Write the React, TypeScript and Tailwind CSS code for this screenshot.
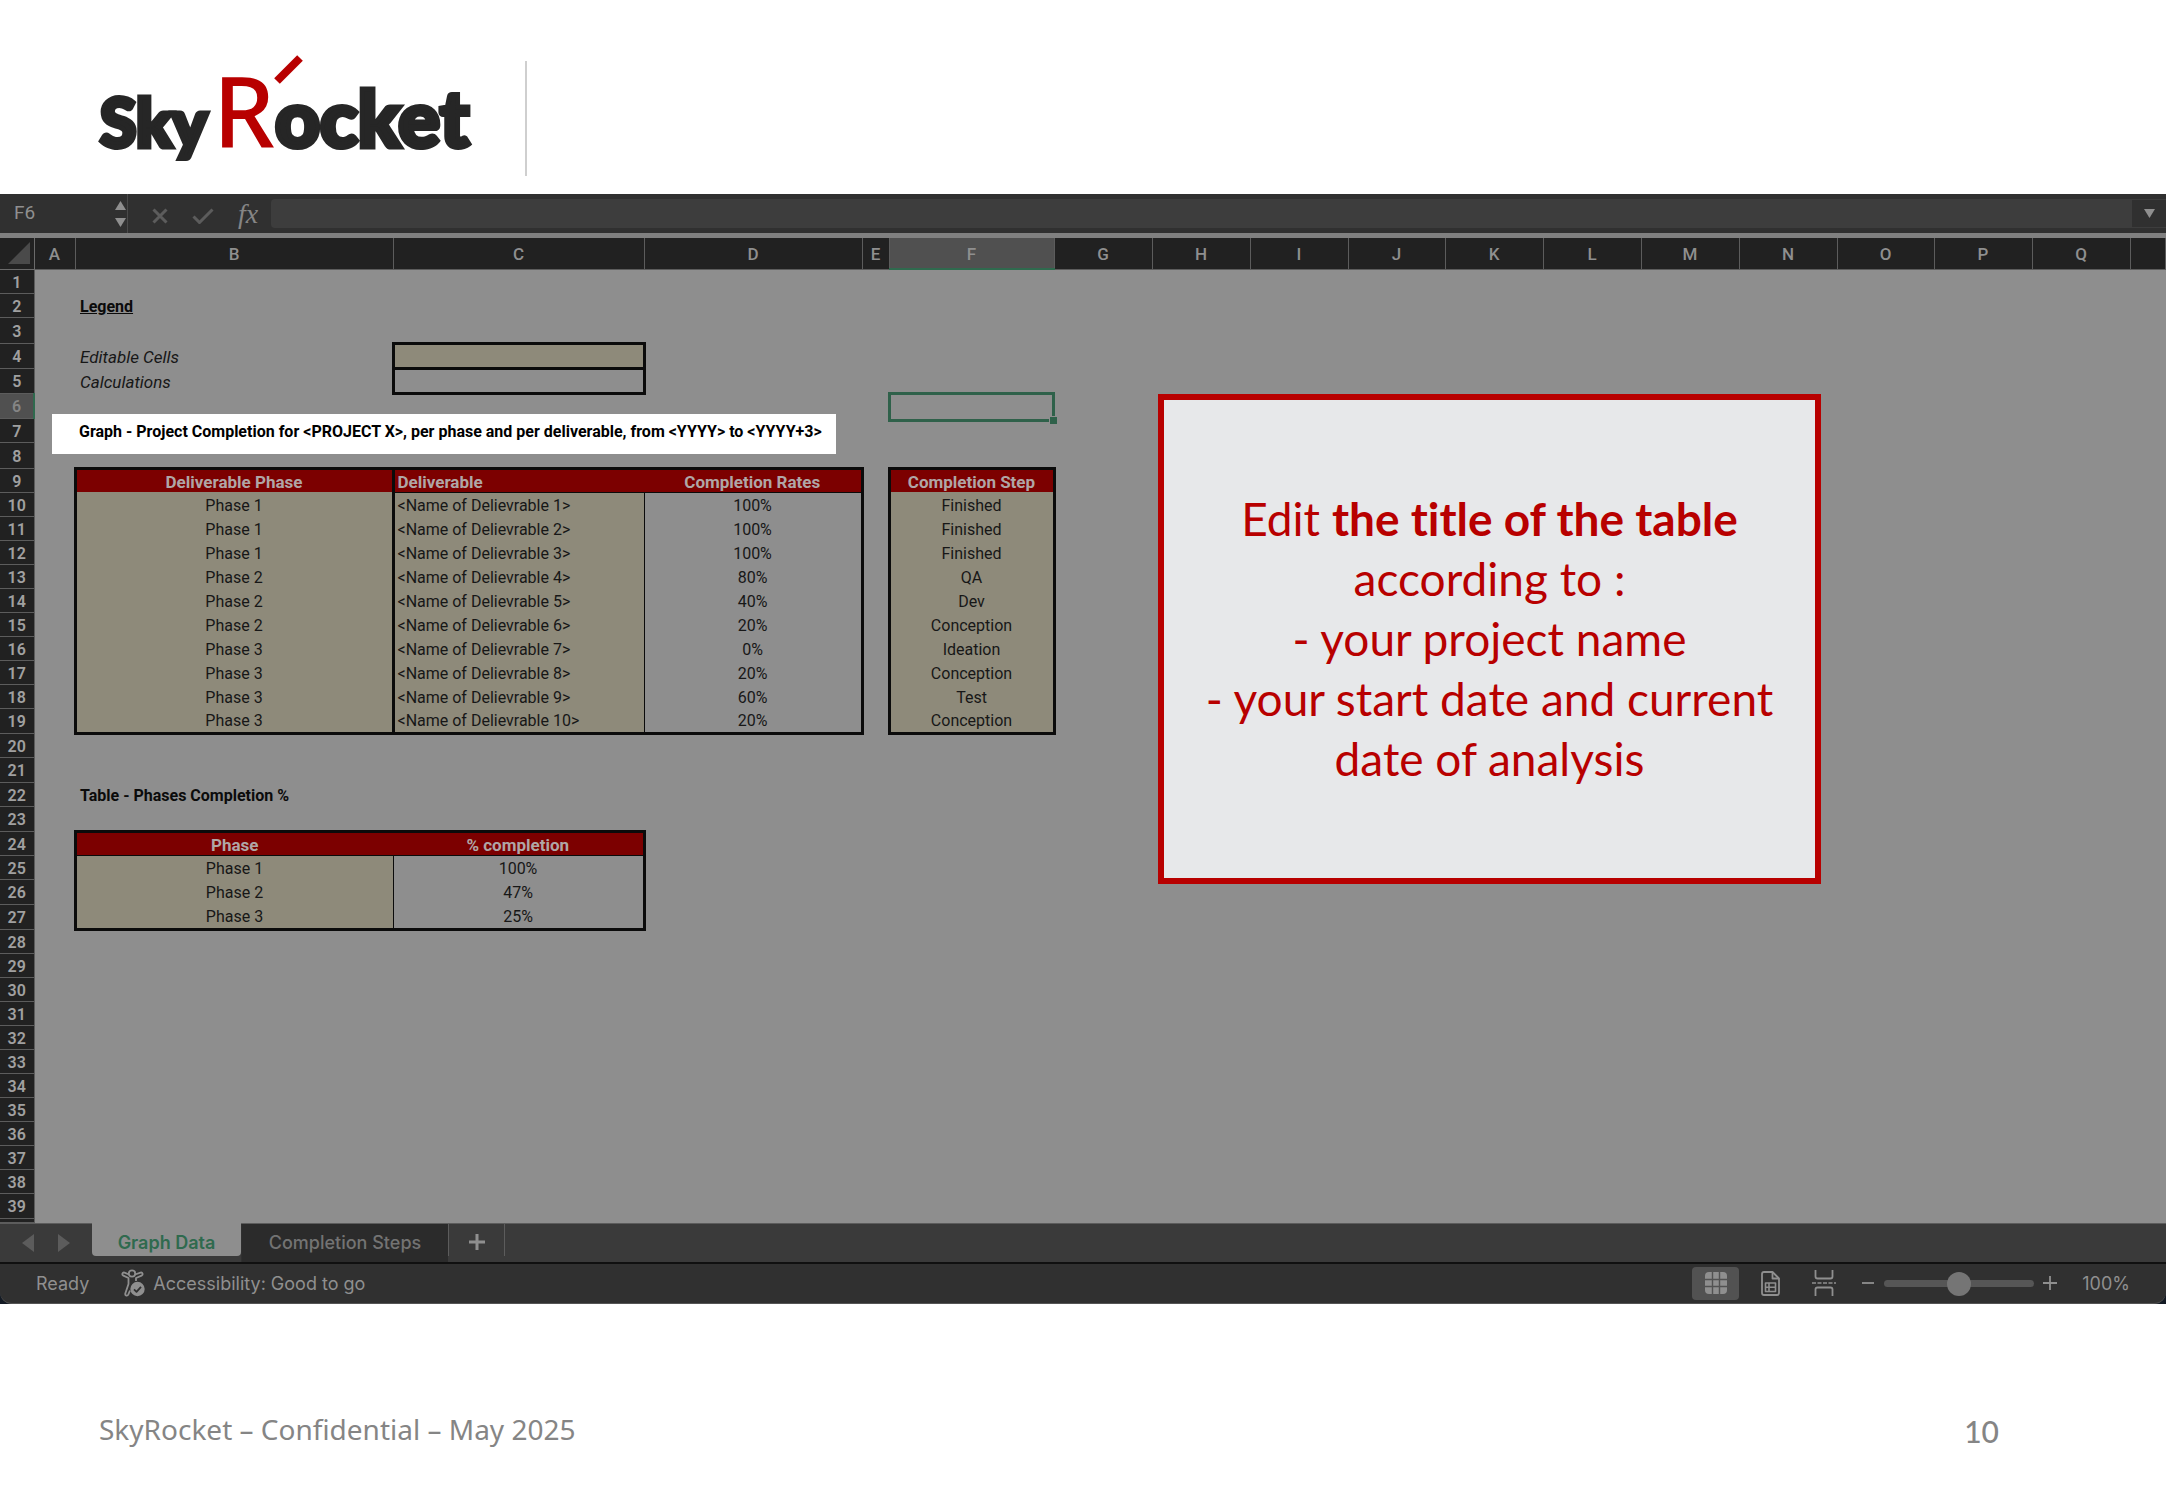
import React from "react";

const columns: { name: string; width: string }[] = [
  { name: "A", width: "w-[41px]" },
  { name: "B", width: "w-[318px]" },
  { name: "C", width: "w-[251px]" },
  { name: "D", width: "w-[218px]" },
  { name: "E", width: "w-[27px]" },
  { name: "F", width: "w-[165px]" },
  { name: "G", width: "w-[98px]" },
  { name: "H", width: "w-[98px]" },
  { name: "I", width: "w-[98px]" },
  { name: "J", width: "w-[97px]" },
  { name: "K", width: "w-[98px]" },
  { name: "L", width: "w-[98px]" },
  { name: "M", width: "w-[98px]" },
  { name: "N", width: "w-[98px]" },
  { name: "O", width: "w-[97px]" },
  { name: "P", width: "w-[98px]" },
  { name: "Q", width: "w-[98px]" },
  { name: "", width: "" },
];

const deliverables = [
  { phase: "Phase 1", name: "<Name of Delievrable 1>", rate: "100%", step: "Finished" },
  { phase: "Phase 1", name: "<Name of Delievrable 2>", rate: "100%", step: "Finished" },
  { phase: "Phase 1", name: "<Name of Delievrable 3>", rate: "100%", step: "Finished" },
  { phase: "Phase 2", name: "<Name of Delievrable 4>", rate: "80%", step: "QA" },
  { phase: "Phase 2", name: "<Name of Delievrable 5>", rate: "40%", step: "Dev" },
  { phase: "Phase 2", name: "<Name of Delievrable 6>", rate: "20%", step: "Conception" },
  { phase: "Phase 3", name: "<Name of Delievrable 7>", rate: "0%", step: "Ideation" },
  { phase: "Phase 3", name: "<Name of Delievrable 8>", rate: "20%", step: "Conception" },
  { phase: "Phase 3", name: "<Name of Delievrable 9>", rate: "60%", step: "Test" },
  { phase: "Phase 3", name: "<Name of Delievrable 10>", rate: "20%", step: "Conception" },
];

const phases = [
  { phase: "Phase 1", completion: "100%" },
  { phase: "Phase 2", completion: "47%" },
  { phase: "Phase 3", completion: "25%" },
];

const ink = "border-[#0b0b0b]";
const redCell = "bg-[#7c0000] text-[17px] font-bold text-[#b0a6a6]";
const beige = "bg-[#8e8a7a]";

function Row({
  n,
  h = "h-6",
  selected = false,
  children,
}: {
  n: number | "";
  h?: string;
  selected?: boolean;
  children?: React.ReactNode;
}) {
  return (
    <tr className={h}>
      <th
        scope="row"
        className={
          selected
            ? "border-y border-r-2 border-y-[#5c5c5c] border-r-[#2f6a4e] bg-[#505050] font-semibold text-[#858585]"
            : "border-y border-r border-[#5c5c5c] bg-[#212121] font-semibold text-[#a0a0a0]"
        }
      >
        {n}
      </th>
      {children ?? <td colSpan={18} />}
    </tr>
  );
}

function Logo() {
  return (
    <div className="flex items-baseline font-['Lato'] leading-none font-black text-[#262626]">
      <span className="w-[114px] pl-px text-[66px] [-webkit-text-stroke:5px_#262626]">Sky</span>
      <span className="relative font-['Noto_Sans'] text-[98px] font-medium text-[#b80000]">
        R
        <svg viewBox="0 0 30 30" className="absolute top-[-5px] left-[61px] h-[30px] w-[30px]" aria-hidden="true">
          <path d="M3 26 L26 3" stroke="#b80000" strokeWidth="8" fill="none" />
        </svg>
      </span>
      <span className="text-[78px] [-webkit-text-stroke:5px_#262626]">ocket</span>
    </div>
  );
}

function FormulaBar() {
  return (
    <div className="flex h-[39px] bg-[#303030] text-[#8f8f8f]">
      <div className="flex w-32 items-center border-r border-[#4a4a4a] pr-px pl-[14px]">
        <input
          aria-label="Name box"
          defaultValue="F6"
          className="min-w-0 flex-1 bg-transparent text-[19px] outline-none"
        />
        <div className="flex flex-col gap-2">
          <button aria-label="Previous name" className="block">
            <svg viewBox="0 0 11 9" className="h-[9px] w-[11px]">
              <path d="M5.500 0L11 9H0z" fill="#8f8f8f" />
            </svg>
          </button>
          <button aria-label="Next name" className="block">
            <svg viewBox="0 0 11 9" className="h-[9px] w-[11px]">
              <path d="M5.500 9L11 0H0z" fill="#8f8f8f" />
            </svg>
          </button>
        </div>
      </div>
      <div className="flex w-[143px] items-center gap-6 pt-1 pl-6">
        <button aria-label="Cancel">
          <svg viewBox="0 0 16 16" className="h-4 w-4">
            <path d="M1.500 1.500l13 13M14.500 1.500l-13 13" stroke="#5c5c5c" strokeWidth="3" />
          </svg>
        </button>
        <button aria-label="Enter">
          <svg viewBox="0 0 22 16" className="h-4 w-[22px]">
            <path d="M1.500 8.500l6 6L20.500 1.500" stroke="#5c5c5c" strokeWidth="3" fill="none" />
          </svg>
        </button>
        <button
          aria-label="Insert function"
          className="pb-1 font-['Liberation_Serif'] text-[28px] leading-none text-[#858585] italic"
        >
          fx
        </button>
      </div>
      <div className="my-[5px] flex min-w-0 flex-1 rounded-l-sm bg-[#3d3d3d]">
        <input aria-label="Formula" className="min-w-0 flex-1 bg-transparent px-2 outline-none" />
        <button aria-label="Expand formula bar" className="my-px flex w-[34px] items-center justify-center bg-[#303030]">
          <svg viewBox="0 0 11 9" className="h-[9px] w-[11px]">
            <path d="M5.500 9L11 0H0z" fill="#8f8f8f" />
          </svg>
        </button>
      </div>
    </div>
  );
}

function Sheet() {
  return (
    <table className="w-full table-fixed border-collapse bg-[#8e8e8e] text-[16px] leading-[18px] text-[#171717] [&_tbody_td]:pt-[3px] [&_tbody_th]:pt-[3px]">
      <colgroup>
        <col className="w-[34px]" />
        {columns.map((c, i) => (
          <col key={i} className={c.width} />
        ))}
      </colgroup>
      <thead>
        <tr className="h-[31px] bg-[#212121] text-[17px] text-[#8f8f8f]">
          <th className="border-r border-b border-[#6a6a6a]">
            <svg viewBox="0 0 22 22" className="ml-2 h-[22px] w-[22px]" aria-label="Select all">
              <path d="M22 0V22H0z" fill="#4a4a4a" />
            </svg>
          </th>
          {columns.map((c, i) => (
            <th
              key={i}
              scope="col"
              className={
                c.name === "F"
                  ? "border-x border-b-2 border-x-[#5c5c5c] border-b-[#2f6a4e] bg-[#505050] pt-[2px] font-medium"
                  : "border-x border-b border-[#5c5c5c] pt-[2px] font-medium"
              }
            >
              {c.name}
            </th>
          ))}
        </tr>
      </thead>
      <tbody>
        <Row n={1} />
        <Row n={2}>
          <td />
          <td className="pl-[5px] font-bold text-[#0b0b0b] underline">Legend</td>
        </Row>
        <Row n={3} h="h-[26px]" />
        <Row n={4} h="h-[25px]">
          <td />
          <td className="pl-[5px] text-[17px] italic">Editable Cells</td>
          <td className={`border-[3px] ${ink} ${beige}`} />
        </Row>
        <Row n={5} h="h-[25px]">
          <td />
          <td className="pl-[5px] text-[17px] italic">Calculations</td>
          <td className={`border-[3px] ${ink}`} />
        </Row>
        <Row n={6} h="h-[25px]" selected>
          <td colSpan={5} />
          <td>
            <div className="relative h-5">
              <div className="absolute -inset-x-px -top-[5px] -bottom-[5px] border-[3px] border-[#2f614a]">
                <span className="absolute -right-[5px] -bottom-[5px] h-2 w-2 border-t border-l border-[#8e8e8e] bg-[#2f614a]" />
              </div>
            </div>
          </td>
        </Row>
        <Row n={7}>
          <td />
          <td>
            <div className="relative h-5">
              <h1 className="absolute -top-2 -left-[23px] flex h-10 items-center bg-white pr-[14px] pb-1 pl-[27px] font-bold whitespace-nowrap text-black">
                Graph - Project Completion for &lt;PROJECT X&gt;, per phase and per deliverable, from &lt;YYYY&gt; to
                &lt;YYYY+3&gt;
              </h1>
            </div>
          </td>
        </Row>
        <Row n={8} h="h-[26px]" />
        <Row n={9}>
          <td />
          <td className={`border-3 ${ink} border-b-0 text-center ${redCell}`}>Deliverable Phase</td>
          <td className={`border-t-3 border-b ${ink} pl-[3px] ${redCell}`}>Deliverable</td>
          <td className={`border-t-3 border-r-3 border-b ${ink} text-center ${redCell}`}>Completion Rates</td>
          <td />
          <td className={`border-3 border-b-0 ${ink} text-center ${redCell}`}>Completion Step</td>
        </Row>
        {deliverables.map((d, i) => {
          const last = i === deliverables.length - 1;
          const end = last ? "border-b-3" : "";
          return (
            <Row key={d.name} n={10 + i} h={last ? "h-[25px]" : "h-6"}>
              <td />
              <td className={`border-x-3 ${end} ${ink} ${beige} text-center`}>{d.phase}</td>
              <td className={`border-r ${end} ${ink} ${beige} pl-[3px] whitespace-nowrap`}>{d.name}</td>
              <td className={`border-r-3 ${end} ${ink} text-center`}>{d.rate}</td>
              <td />
              <td className={`border-x-3 ${end} ${ink} ${beige} text-center`}>{d.step}</td>
            </Row>
          );
        })}
        <Row n={20} />
        <Row n={21} h="h-[25px]" />
        <Row n={22}>
          <td />
          <td className="pl-[5px] font-bold text-[#0b0b0b]">Table - Phases Completion %</td>
        </Row>
        <Row n={23} h="h-[25px]" />
        <Row n={24}>
          <td />
          <td className={`border-t-3 border-b border-l-3 ${ink} text-center ${redCell}`}>Phase</td>
          <td className={`border-t-3 border-r-3 border-b ${ink} text-center ${redCell}`}>% completion</td>
        </Row>
        {phases.map((p, i) => {
          const end = i === phases.length - 1 ? "border-b-3" : "";
          return (
            <Row key={p.phase} n={25 + i} h={i === 0 ? "h-6" : "h-[25px]"}>
              <td />
              <td className={`border-r border-l-3 ${end} ${ink} ${beige} text-center`}>{p.phase}</td>
              <td className={`border-r-3 ${end} ${ink} text-center`}>{p.completion}</td>
            </Row>
          );
        })}
        {Array.from({ length: 12 }, (_, i) => (
          <Row key={i} n={28 + i} h={i === 11 ? "h-[25px]" : "h-6"} />
        ))}
        <Row n="" h="h-1" />
      </tbody>
    </table>
  );
}

function SheetTabs() {
  return (
    <div className="flex h-[39px] border-t border-[#5c5c5c] bg-[#3a3a3a] font-['Inter'] text-[18px] font-medium">
      <div className="flex w-[92px] items-center gap-6 pl-[22px]">
        <button aria-label="Previous sheet">
          <svg viewBox="0 0 12 18" className="h-[18px] w-3">
            <path d="M12 0V18L0 9z" fill="#5c5c5c" />
          </svg>
        </button>
        <button aria-label="Next sheet">
          <svg viewBox="0 0 12 18" className="h-[18px] w-3">
            <path d="M0 0V18L12 9z" fill="#5c5c5c" />
          </svg>
        </button>
      </div>
      <button className="-mt-px mb-[6px] w-[149px] rounded-b bg-[#8e8e8e] pt-[6px] font-semibold text-[#2f6a4e]">
        Graph Data
      </button>
      <button className="w-[207px] border-l border-[#303030] bg-[#2b2b2b] text-[#737373]">Completion Steps</button>
      <button
        aria-label="Add sheet"
        className="mb-[6px] flex w-[57px] items-center justify-center border-x border-[#5c5c5c] pt-1"
      >
        <svg viewBox="0 0 16 16" className="h-4 w-4">
          <path d="M8 0V16M0 8H16" stroke="#8f8f8f" strokeWidth="3" />
        </svg>
      </button>
    </div>
  );
}

function StatusBar() {
  return (
    <div className="flex h-[42px] items-center rounded-b-xl border-t-2 border-b border-t-[#101010] border-b-[#555555] bg-[#303030] pr-9 pl-9 font-['Inter'] text-[18px] text-[#8f8f8f]">
      <span>Ready</span>
      <button className="ml-8 flex items-center gap-2">
        <svg viewBox="0 0 24 28" className="h-7 w-6" fill="none" stroke="#8f8f8f" strokeWidth="1.800" strokeLinejoin="round">
          <circle cx="11" cy="4.500" r="3.200" />
          <path d="M8 5.500L3.500 3.600C1.500 3 .4 5.600 2.400 6.600L7.500 9V15L4.300 24.500C3.800 26.800 6.500 27.300 7.400 25.300L9 21.500" />
          <path d="M14 5.500L19.500 3.600C21.500 3 22.600 5.600 20.600 6.600L15 9V12" />
          <circle cx="16.500" cy="20" r="7.200" fill="#8f8f8f" stroke="none" />
          <path d="M13 20.300L15.500 22.800L20 17.800" stroke="#303030" />
        </svg>
        Accessibility: Good to go
      </button>
      <div className="ml-auto flex items-center">
        <button aria-label="Normal view" className="flex h-[33px] w-[47px] items-center justify-center rounded bg-[#525252]">
          <svg viewBox="0 0 22 22" className="h-[22px] w-[22px]">
            <rect width="22" height="22" rx="4" fill="#8f8f8f" />
            <path d="M7.500 0V22M14.500 0V22M0 7.500H22M0 14.500H22" stroke="#525252" strokeWidth="1.400" />
          </svg>
        </button>
        <button aria-label="Page layout" className="ml-[22px]">
          <svg viewBox="0 0 19 25" className="h-[25px] w-[19px]" fill="none" stroke="#8f8f8f" strokeWidth="1.800" strokeLinejoin="round">
            <path d="M3 1H11.500L18 7.500V22Q18 24 16 24H3Q1 24 1 22V3Q1 1 3 1z" />
            <path d="M11.500 1V7.500H18" />
            <path d="M4.500 12H14.500V20.500H4.500zM4.500 16.200H14.500M8 12V20.500" strokeWidth="1.600" />
          </svg>
        </button>
        <button aria-label="Page break preview" className="ml-8">
          <svg viewBox="0 0 24 26" className="h-[26px] w-6" fill="none" stroke="#8f8f8f" strokeWidth="1.800">
            <path d="M3.500 0V6.500Q3.500 8.500 5.500 8.500H18.500Q20.500 8.500 20.500 6.500V0" />
            <path d="M3.500 26V19.500Q3.500 17.500 5.500 17.500H18.500Q20.500 17.500 20.500 19.500V26" />
            <path d="M0 13H24" strokeDasharray="4 1.500" strokeWidth="1.500" />
          </svg>
        </button>
        <button aria-label="Zoom out" className="ml-[25px]">
          <svg viewBox="0 0 14 14" className="h-[14px] w-[14px]">
            <path d="M1 7H13" stroke="#8f8f8f" strokeWidth="1.800" />
          </svg>
        </button>
        <input
          type="range"
          aria-label="Zoom"
          defaultValue={50}
          className="ml-[9px] h-6 w-[150px] appearance-none bg-transparent [&::-webkit-slider-runnable-track]:h-[7px] [&::-webkit-slider-runnable-track]:rounded-full [&::-webkit-slider-runnable-track]:bg-[#565656] [&::-webkit-slider-thumb]:-mt-2 [&::-webkit-slider-thumb]:h-6 [&::-webkit-slider-thumb]:w-6 [&::-webkit-slider-thumb]:appearance-none [&::-webkit-slider-thumb]:rounded-full [&::-webkit-slider-thumb]:bg-[#757575]"
        />
        <button aria-label="Zoom in" className="ml-[9px]">
          <svg viewBox="0 0 14 14" className="h-[14px] w-[14px]">
            <path d="M0 7H14M7 0V14" stroke="#8f8f8f" strokeWidth="1.800" />
          </svg>
        </button>
        <span className="ml-[25px]">100%</span>
      </div>
    </div>
  );
}

export default function App() {
  return (
    <div className="min-h-screen bg-white font-['Roboto',sans-serif]">
      <header className="flex h-[194px] items-center pt-[60px] pb-[17px] pl-[99px]">
        <div className="w-[426px] pb-5">
          <Logo />
        </div>
        <div className="h-[115px] border-l-2 border-[#cfcfcf]" />
      </header>

      <main className="relative bg-[#131a24]">
        <FormulaBar />
        <div className="h-[5px] bg-[#808080]" />
        <Sheet />
        <SheetTabs />
        <StatusBar />

        <aside className="absolute top-[200px] left-[1158px] flex h-[490px] w-[663px] items-center justify-center border-6 border-[#b80000] bg-[#e7e8ea] text-center font-['Lato'] text-[46px] leading-[60px] text-[#b80000] [font-variant-ligatures:none]">
          <p>
            Edit <b>the title of the table</b>
            <br />
            according to :
            <br />- your project name
            <br />- your start date and current
            <br />
            date of analysis
          </p>
        </aside>
      </main>

      <footer className="flex items-center justify-between pt-[103px] pr-[167px] pb-12 pl-[99px] font-['Noto_Sans'] text-[28px] leading-10 text-[#858585]">
        <span>SkyRocket – Confidential – May 2025</span>
        <span className="pt-1 font-['Lato'] text-[30px] font-medium">10</span>
      </footer>
    </div>
  );
}
